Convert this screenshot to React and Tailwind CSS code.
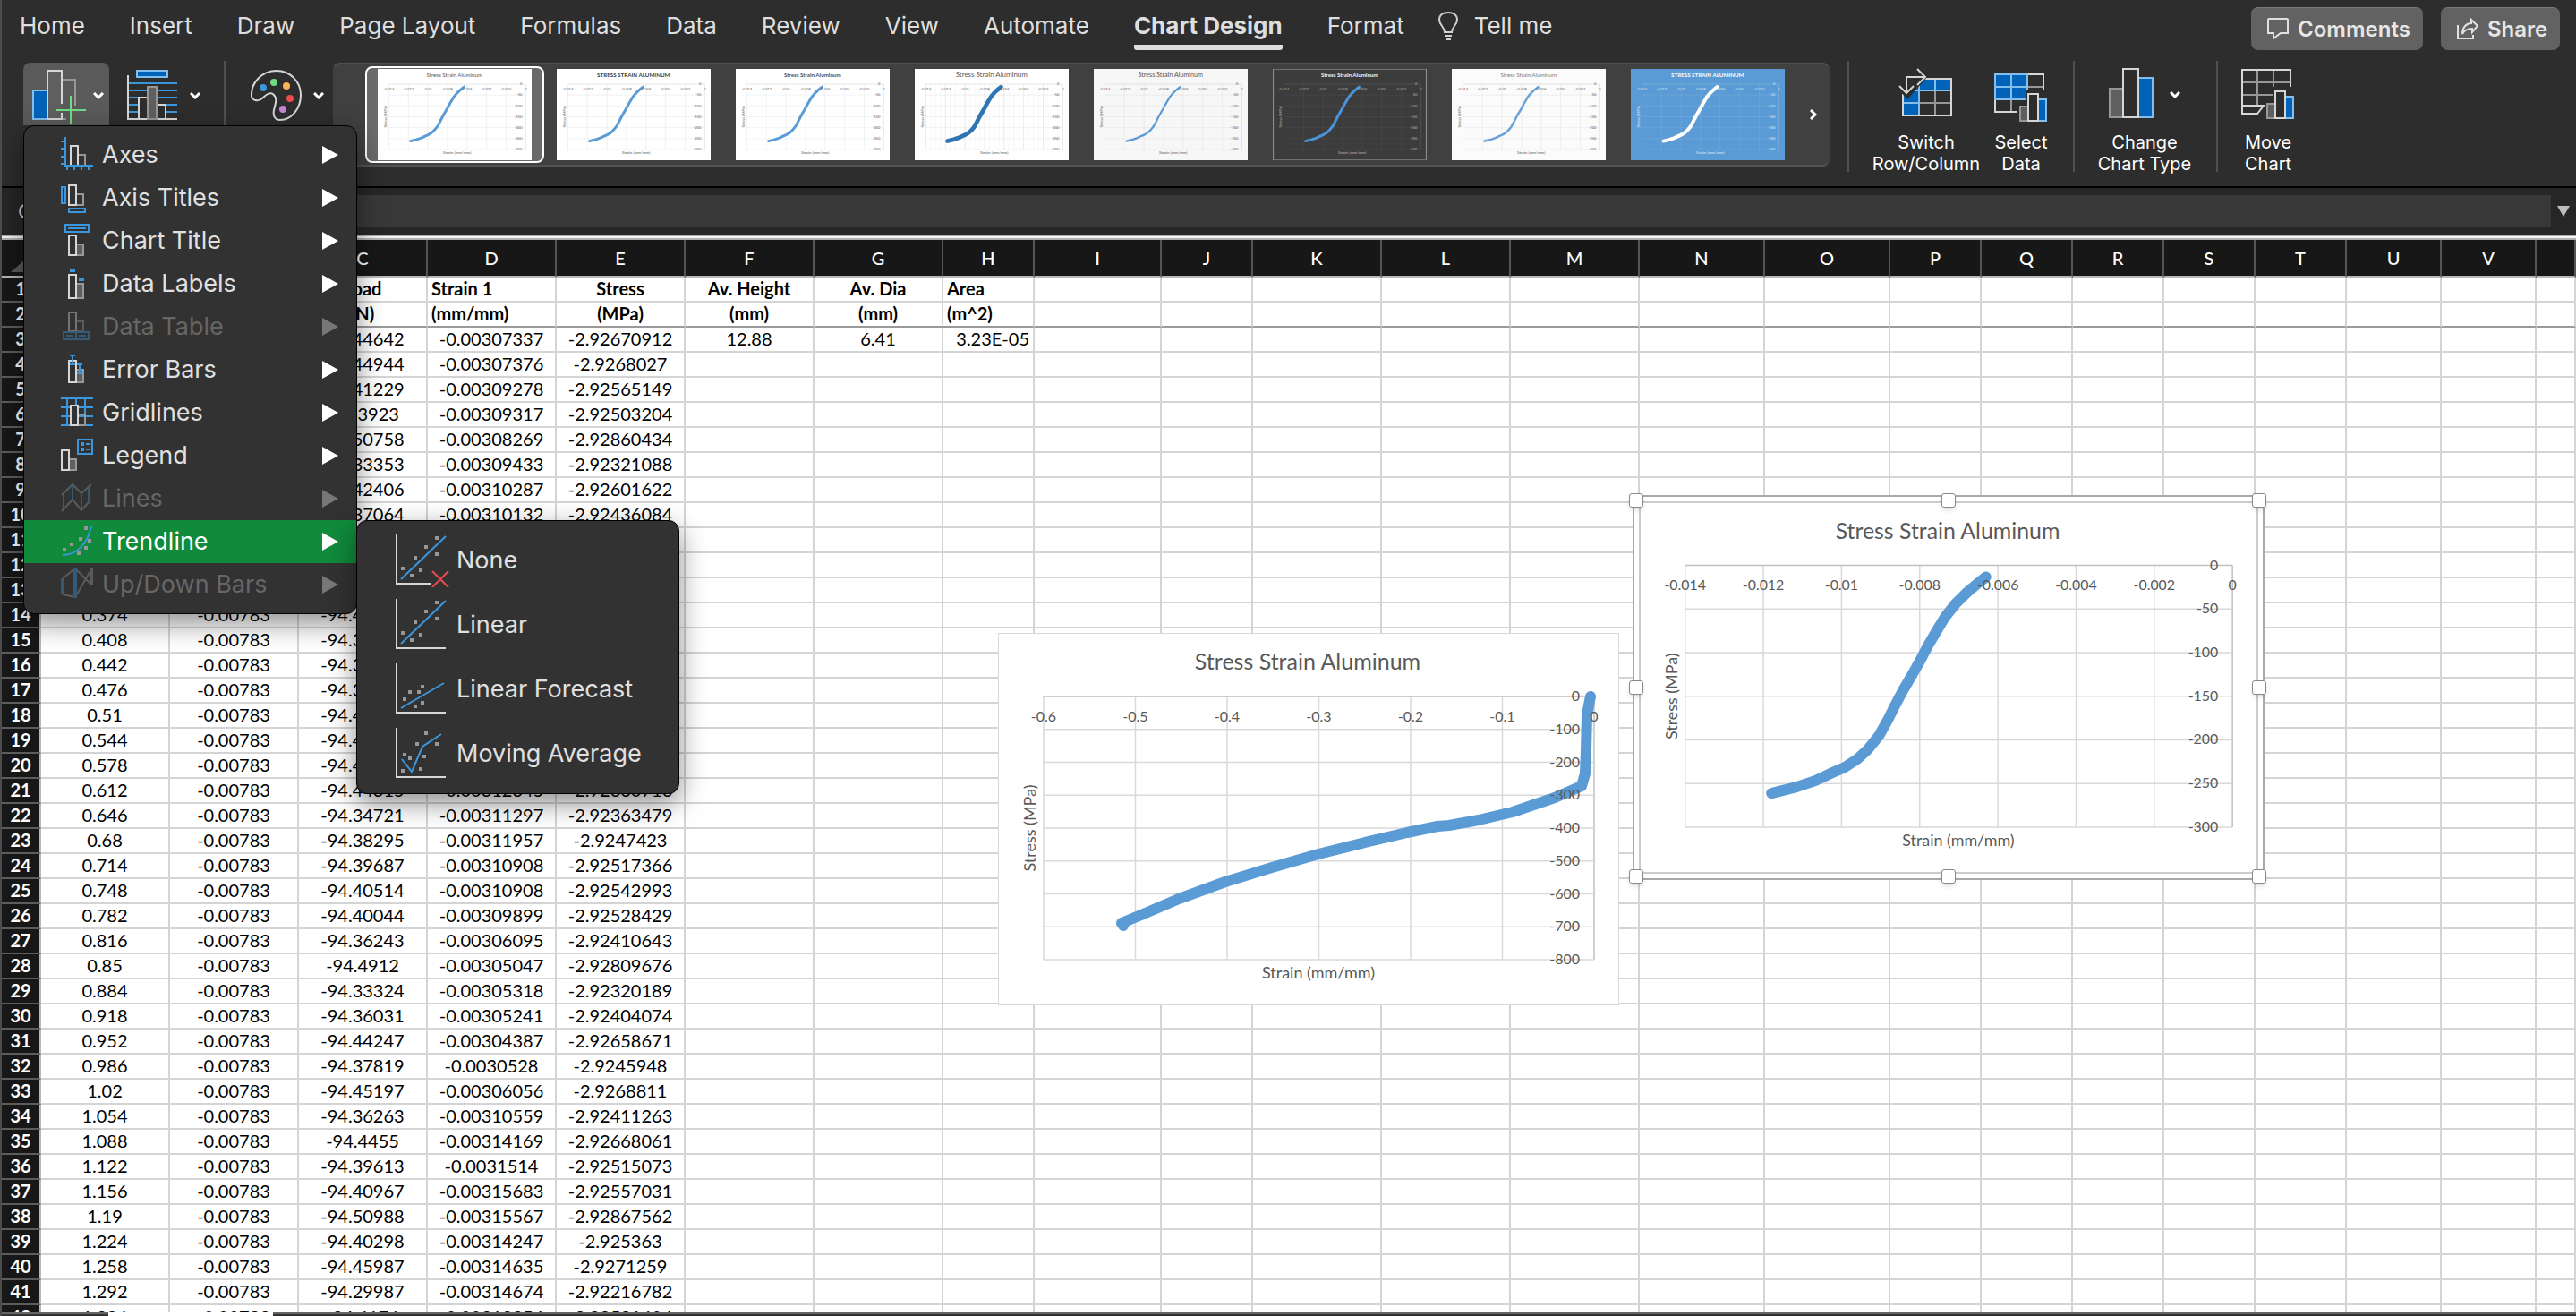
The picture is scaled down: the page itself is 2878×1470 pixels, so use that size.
import { clsx } from "clsx";

const BLUE = "#3a96dd";
const FILL = "#0063b8";
const LIGHT = "#83beec";
const PALE = "#d6d6d6";
const MID = "#979797";
const DARK = "#5f5f5f";

const TABS = ["Home", "Insert", "Draw", "Page Layout", "Formulas", "Data", "Review", "View", "Automate", "Chart Design", "Format"];

const COLUMNS = [
  ["A", "w-[144px]"],
  ["B", "w-[144px]"],
  ["C", "w-[144px]"],
  ["D", "w-[144px]"],
  ["E", "w-[144px]"],
  ["F", "w-[144px]"],
  ["G", "w-[144px]"],
  ["H", "w-[102px]"],
  ["I", "w-[142px]"],
  ["J", "w-[102px]"],
  ["K", "w-[144px]"],
  ["L", "w-[144px]"],
  ["M", "w-[144px]"],
  ["N", "w-[140px]"],
  ["O", "w-[140px]"],
  ["P", "w-[102px]"],
  ["Q", "w-[102px]"],
  ["R", "w-[102px]"],
  ["S", "w-[102px]"],
  ["T", "w-[102px]"],
  ["U", "w-[106px]"],
  ["V", "w-[106px]"],
  ["", "w-auto"],
];

const P = "-0.00783";

const ROWS = [
  ["", "", "Load", "Strain 1", "Stress", "Av. Height", "Av. Dia", "Area"],
  ["", "", "(N)", "(mm/mm)", "(MPa)", "(mm)", "(mm)", "(m^2)"],
  ["", "", "-94.44642", "-0.00307337", "-2.92670912", "12.88", "6.41", "3.23E-05"],
  ["", "", "-94.44944", "-0.00307376", "-2.9268027"],
  ["", "", "-94.41229", "-0.00309278", "-2.92565149"],
  ["", "", "-94.3923", "-0.00309317", "-2.92503204"],
  ["", "", "-94.50758", "-0.00308269", "-2.92860434"],
  ["", "", "-94.33353", "-0.00309433", "-2.92321088"],
  ["", "", "-94.42406", "-0.00310287", "-2.92601622"],
  ["", "", "-94.37064", "-0.00310132", "-2.92436084"],
  [],
  [],
  [],
  ["0.374", P, "-94.41508"],
  ["0.408", P, "-94.38121"],
  ["0.442", P, "-94.36774"],
  ["0.476", P, "-94.39052"],
  ["0.51", P, "-94.42236"],
  ["0.544", P, "-94.40871"],
  ["0.578", P, "-94.43119"],
  ["0.612", P, "-94.44315", "-0.00312345", "-2.92660716"],
  ["0.646", P, "-94.34721", "-0.00311297", "-2.92363479"],
  ["0.68", P, "-94.38295", "-0.00311957", "-2.9247423"],
  ["0.714", P, "-94.39687", "-0.00310908", "-2.92517366"],
  ["0.748", P, "-94.40514", "-0.00310908", "-2.92542993"],
  ["0.782", P, "-94.40044", "-0.00309899", "-2.92528429"],
  ["0.816", P, "-94.36243", "-0.00306095", "-2.92410643"],
  ["0.85", P, "-94.4912", "-0.00305047", "-2.92809676"],
  ["0.884", P, "-94.33324", "-0.00305318", "-2.92320189"],
  ["0.918", P, "-94.36031", "-0.00305241", "-2.92404074"],
  ["0.952", P, "-94.44247", "-0.00304387", "-2.92658671"],
  ["0.986", P, "-94.37819", "-0.0030528", "-2.9245948"],
  ["1.02", P, "-94.45197", "-0.00306056", "-2.9268811"],
  ["1.054", P, "-94.36263", "-0.00310559", "-2.92411263"],
  ["1.088", P, "-94.4455", "-0.00314169", "-2.92668061"],
  ["1.122", P, "-94.39613", "-0.0031514", "-2.92515073"],
  ["1.156", P, "-94.40967", "-0.00315683", "-2.92557031"],
  ["1.19", P, "-94.50988", "-0.00315567", "-2.92867562"],
  ["1.224", P, "-94.40298", "-0.00314247", "-2.925363"],
  ["1.258", P, "-94.45987", "-0.00314635", "-2.9271259"],
  ["1.292", P, "-94.29987", "-0.00314674", "-2.92216782"],
  ["1.326", P, "-94.4176", "-0.00313354", "-2.92581604"],
];

const FULL_CURVE = {
  x: ["-0.6", "-0.5", "-0.4", "-0.3", "-0.2", "-0.1", "0"],
  y: ["0", "-100", "-200", "-300", "-400", "-500", "-600", "-700", "-800"],
  points:
    "661,70 657,90 656,130 655,156 651,170 621,183 574,199 536,208 503,214 490,215 456,222 409,233 357,246 305,261 253,277 201,296 159,314 137,323 139,326",
};

const ELASTIC_CURVE = {
  x: ["-0.014", "-0.012", "-0.01", "-0.008", "-0.006", "-0.004", "-0.002", "0"],
  y: ["0", "-50", "-100", "-150", "-200", "-250", "-300"],
  points:
    "388,83 379,90 366,101 354,113 342,128 333,143 323,160 314,177 305,193 295,210 286,227 278,243 268,261 255,277 243,288 229,297 215,303 196,312 175,319 147,326",
};

const STYLES = [
  { name: "Style 1" },
  { name: "Style 2", caps: true, bold: true, title: "#404040" },
  { name: "Style 3", bold: true, title: "#44546a", grid: "#d9e0ec" },
  { name: "Style 4", titleSize: 32, stroke: "#2e75b6", weight: 19, minor: true },
  { name: "Style 5", titleSize: 29, weight: 9, bg: "#f7f7f7" },
  { name: "Style 6", bold: true, bg: "#3c3c3c", title: "#f2f2f2", label: "#b5b5b5", grid: "#555555", axis: "#777777", frame: "#8c8c8c", stroke: "#4a94dc" },
  { name: "Style 7", title: "#7f7f7f", bg: "#fbfbfb", weight: 10, stroke: "#6aa1d8" },
  { name: "Style 8", caps: true, bold: true, bg: "#5b9bd5", title: "#ffffff", label: "#dcebf8", grid: "#7db0de", axis: "#a9cbe9", stroke: "#ffffff", weight: 16 },
];

function Chart({ data, look = {}, className }) {
  const {
    bg = "#ffffff",
    grid = "#d9d9d9",
    axis = "#bfbfbf",
    title = "#595959",
    label = "#595959",
    stroke = "#5b9bd5",
    weight = 12,
    titleSize = 25,
    bold,
    caps,
    minor,
    frame,
  } = look;
  const left = 50, right = 665, top = 70, bottom = 364;
  const stepX = (right - left) / (data.x.length - 1);
  const stepY = (bottom - top) / (data.y.length - 1);
  const heading = "Stress Strain Aluminum";

  return (
    <svg viewBox="0 0 692 414" preserveAspectRatio="xMidYMid slice" className={clsx("block", className)} fontFamily="Lato, 'Open Sans', sans-serif" role="img" aria-label={heading}>
      <rect width="692" height="414" fill={bg} />
      {frame && <rect x="2" y="2" width="688" height="410" fill="none" stroke={frame} strokeWidth="5" />}
      {minor &&
        Array.from({ length: 28 }, (_, i) => (
          <line key={i} x1={left + (i * (right - left)) / 28} x2={left + (i * (right - left)) / 28} y1={top} y2={bottom} stroke="#eeeeee" strokeWidth="2" />
        ))}
      {data.x.map((t, i) => (
        <line key={t} x1={left + i * stepX} x2={left + i * stepX} y1={top} y2={bottom} stroke={i === data.x.length - 1 ? axis : grid} strokeWidth="1.5" />
      ))}
      {data.y.map((t, i) => (
        <line key={t} x1={left} x2={right} y1={top + i * stepY} y2={top + i * stepY} stroke={i === 0 ? axis : grid} strokeWidth="1.5" />
      ))}
      <polyline points={data.points} fill="none" stroke={stroke} strokeWidth={weight} strokeLinecap="round" strokeLinejoin="round" />
      <g fill={label} fontSize="16" textAnchor="middle">
        {data.x.map((t, i) => (
          <text key={t} x={left + i * stepX} y="98">{t}</text>
        ))}
      </g>
      <g fill={label} fontSize="16" textAnchor="end">
        {data.y.map((t, i) => (
          <text key={t} x="649" y={top + i * stepY + 5}>{t}</text>
        ))}
      </g>
      <text x="345" y="40" textAnchor="middle" fontSize={titleSize} fontWeight={bold ? 700 : 400} fill={title}>
        {caps ? heading.toUpperCase() : heading}
      </text>
      <text x="357" y="385" textAnchor="middle" fontSize="18" fill={label}>Strain (mm/mm)</text>
      <text transform="translate(41 217) rotate(-90)" textAnchor="middle" fontSize="18" fill={label}>Stress (MPa)</text>
    </svg>
  );
}

function Chevron({ className }) {
  return (
    <svg viewBox="0 0 12 8" className={clsx("w-3 h-2", className)} fill="none" stroke="#fff" strokeWidth="3">
      <path d="M1 1 L6 6 L11 1" />
    </svg>
  );
}

function Divider({ className }) {
  return <div className={clsx("w-0.5 h-[124px] bg-[#505050] shrink-0", className)} />;
}

function AddElementIcon() {
  return (
    <svg width="60" height="60" viewBox="0 0 60 60" fill="none" strokeWidth="2">
      <rect x="1" y="23" width="16" height="32" fill={FILL} stroke={LIGHT} />
      <path d="M33 11 H48 V40 M33 55 H38" stroke={MID} />
      <path d="M33 38 V1 H17 V55 H33 V48" fill={DARK} stroke={PALE} />
      <path d="M43 29 V60 M27 45 H60" stroke="#6fdc85" />
    </svg>
  );
}

function QuickLayoutIcon() {
  return (
    <svg width="56" height="60" viewBox="0 0 56 60" fill="none" strokeWidth="2">
      <rect x="11" y="1" width="34" height="7" fill={FILL} stroke={LIGHT} />
      <path d="M2 15 H56 M2 23 H56 M2 31 H56 M2 39 H56 M2 47 H56" stroke={BLUE} />
      <path d="M1 6 V55 H56" stroke={PALE} />
      <rect x="13" y="31" width="10" height="24" fill="#2d2d2d" stroke={PALE} />
      <rect x="33" y="39" width="10" height="16" fill="#2d2d2d" stroke={PALE} />
      <rect x="23" y="19" width="10" height="36" fill={DARK} stroke={MID} />
    </svg>
  );
}

function PaletteIcon() {
  return (
    <svg width="58" height="58" viewBox="0 0 58 58">
      <path
        d="M29 1 C44 1 56 13 56 28 C56 43 46 56 33 56 C26 56 25 50 26 45 C28 37 30 32 26 28 C22 24 17 28 14 31 C9 36 3 35 1 30 C0 14 13 1 29 1Z"
        fill="none"
        stroke={PALE}
        strokeWidth="2"
      />
      <circle cx="14" cy="20" r="4" fill={BLUE} />
      <circle cx="26" cy="14" r="4" fill="#6fdc85" />
      <circle cx="40" cy="18" r="4" fill="#fbb355" />
      <circle cx="44" cy="32" r="4" fill="#ea4b4f" />
      <circle cx="36" cy="44" r="4" fill="#c587d8" />
    </svg>
  );
}

function SwitchIcon() {
  return (
    <svg width="62" height="60" viewBox="0 0 62 60" fill="none" strokeWidth="2">
      <path d="M5 12 H59 V25 H23 V53 H5Z" fill={FILL} />
      <path d="M41 25 V53 M23 39 H59 M23 25 H59" stroke={MID} />
      <path d="M41 12 V25 M5 25 H59 M23 12 V53 M5 39 H23" stroke={LIGHT} />
      <rect x="5" y="12" width="54" height="41" stroke={PALE} />
      <path d="M0 8 H34 L10 35 L0 24Z" fill="#2d2d2d" />
      <path d="M9 28 V10 H29 M1 20 L9 28 L17 20 M21 1 L30 10 L21 19" stroke={PALE} />
    </svg>
  );
}

function MiniBars() {
  return (
    <>
      <path d="M25 36 H36 V20 H60 V56 H25Z" fill="#2d2d2d" />
      <rect x="29" y="39" width="9" height="16" fill={DARK} stroke={MID} />
      <rect x="49" y="31" width="9" height="24" fill={FILL} stroke={LIGHT} />
      <rect x="38" y="25" width="11" height="30" fill="#2d2d2d" stroke={PALE} />
    </>
  );
}

function SelectDataIcon() {
  return (
    <svg width="60" height="60" viewBox="0 -4 60 60" fill="none" strokeWidth="2">
      <path d="M37 17 H55 M19 31 V45" stroke={MID} />
      <rect x="1" y="3" width="54" height="42" stroke={PALE} />
      <rect x="1" y="3" width="36" height="28" fill={FILL} stroke={LIGHT} />
      <path d="M19 3 V31 M1 17 H37" stroke={LIGHT} />
      <MiniBars />
    </svg>
  );
}

function ChangeTypeIcon() {
  return (
    <svg width="50" height="60" viewBox="0 0 50 60" strokeWidth="2">
      <rect x="1" y="23" width="15" height="32" fill={DARK} stroke={MID} />
      <rect x="33" y="11" width="16" height="44" fill={FILL} stroke={LIGHT} />
      <rect x="16" y="1" width="17" height="54" fill="#2d2d2d" stroke={PALE} />
    </svg>
  );
}

function MoveChartIcon() {
  return (
    <svg width="60" height="60" viewBox="0 -1 60 60" fill="none" strokeWidth="2">
      <path d="M18 1 V41 M36 1 V41 M1 15 H55 M1 29 H55" stroke={MID} />
      <path d="M1 41 V1 H55 V29" stroke={PALE} />
      <MiniBars />
      <path d="M1 41 H25 L18 50 H1Z" fill="#2d2d2d" stroke={PALE} />
    </svg>
  );
}

function Bars({ x = 9, y = 14, h = 22, short = 13, filled }) {
  return (
    <>
      <rect x={x + 8} y={y + h - short} width="8" height={short} fill={filled ? DARK : "none"} stroke={MID} />
      <rect x={x} y={y} width="8" height={h} fill="#323232" stroke={PALE} />
    </>
  );
}

const MENU_ICONS = {
  Axes: (
    <>
      <Bars x={11} y={10} h={22} short={12} />
      <path d="M5 0 V32 H36 M0 5 H5 M0 13 H5 M0 22 H5 M0 30 H5 M7 32 V37 M15 32 V37 M23 32 V37 M31 32 V37" stroke={BLUE} />
    </>
  ),
  "Axis Titles": (
    <>
      <rect x="1" y="8" width="4" height="18" stroke={BLUE} />
      <Bars y={6} h={22} short={12} />
      <rect x="9" y="32" width="18" height="4" stroke={BLUE} />
    </>
  ),
  "Chart Title": (
    <>
      <rect x="5" y="2" width="26" height="8" stroke={BLUE} />
      <path d="M8 6 H28" stroke={BLUE} />
      <Bars y={14} h={22} short={12} filled />
    </>
  ),
  "Data Labels": (
    <>
      <path d="M10 5 H16 M20 15 H26" stroke={BLUE} strokeWidth="4" />
      <Bars y={10} h={26} short={16} filled />
    </>
  ),
  "Data Table": (
    <>
      <Bars y={4} h={21} short={11} />
      <path d="M3 26 H31 V34 H3Z M17 26 V34 M6 30 H14 M20 30 H28" stroke={BLUE} />
    </>
  ),
  "Error Bars": (
    <>
      <Bars y={10} h={24} short={14} filled />
      <path d="M10 4 H16 M13 4 V14 M10 14 H16 M18 14 H24 M21 14 V24 M18 24 H24" stroke={BLUE} />
    </>
  ),
  Gridlines: (
    <>
      <path d="M0 4 H36 M0 14 H36 M0 24 H36 M0 34 H36 M7 4 V34 M17 4 V34 M27 4 V34" stroke={BLUE} />
      <Bars x={11} y={12} h={22} short={12} />
    </>
  ),
  Legend: (
    <>
      <rect x="19" y="2" width="16" height="16" stroke={BLUE} />
      <path d="M22 7 H26 M22 13 H26" stroke={BLUE} strokeWidth="4" />
      <path d="M28 7 H32 M28 13 H32" stroke={BLUE} />
      <Bars x={1} y={14} h={22} short={12} filled />
    </>
  ),
  Lines: (
    <>
      <path d="M1 16 L13 4 L23 14 L34 4 M1 34 L13 21 L23 33 L33 22" stroke={MID} />
      <path d="M3 15 V31 M13 5 V21 M23 14 V32 M31 8 V24" stroke={BLUE} />
    </>
  ),
  Trendline: (
    <>
      <path d="M4 27 v4 M12 21 v4 M22 15 v4 M28 3 v4 M32 17 v4 M28 25 v4 M20 31 v4" stroke={MID} strokeWidth="4" />
      <path d="M2 35 C18 35 30 22 34 3" stroke={BLUE} />
    </>
  ),
  "Up/Down Bars": (
    <>
      <path d="M2 13 L16 2 L33 19 M2 31 L16 34 L34 3" stroke={MID} />
      <path d="M2 13 V31 M16 1 V35" stroke={BLUE} strokeWidth="4" />
      <path d="M34 1 V20" stroke={MID} strokeWidth="4" />
    </>
  ),
};

const MENU = Object.keys(MENU_ICONS);
const DISABLED = ["Data Table", "Lines", "Up/Down Bars"];

const TRENDLINES = [
  {
    label: "None",
    line: "6,51 56,3",
    axis: "M1 1 V56 H39",
    dots: [[8, 39], [18, 47], [22, 27], [28, 41], [34, 15], [46, 5], [46, 23]],
    cross: true,
  },
  {
    label: "Linear",
    line: "6,51 56,3",
    axis: "M1 1 V56 H56",
    dots: [[8, 39], [18, 47], [22, 27], [28, 41], [34, 15], [46, 5], [46, 23]],
  },
  {
    label: "Linear Forecast",
    line: "6,51 54,23",
    axis: "M1 1 V56 H56",
    dots: [[10, 41], [16, 33], [26, 33], [30, 27], [22, 49], [30, 45]],
  },
  {
    label: "Moving Average",
    line: "7,36 18,50 30,22 51,8",
    axis: "M1 1 V56 H56",
    dots: [[10, 31], [16, 35], [8, 49], [24, 19], [34, 7], [46, 19], [32, 33], [28, 47]],
  },
];

function TrendlineMenu() {
  return (
    <ul className="absolute left-full top-0 w-[361px] py-2 bg-[#323232] border border-black rounded-xl shadow-[0_10px_30px_rgba(0,0,0,0.45)]">
      {TRENDLINES.map((t) => (
        <li key={t.label}>
          <button className="flex items-center w-full h-[72px] pl-[43px] gap-2 text-[27px] leading-8 text-[#e0e0e0]">
            <svg width="60" height="60" viewBox="0 0 60 60" fill="none" strokeWidth="2" className="shrink-0">
              <path d={t.axis} stroke={PALE} />
              {t.dots.map(([x, y]) => (
                <rect key={x + "-" + y} x={x - 2} y={y - 2} width="4" height="4" fill={MID} />
              ))}
              <polyline points={t.line} stroke={BLUE} />
              {t.cross && <path d="M41 42 L59 60 M59 42 L41 60" stroke="#ea4b4f" />}
            </svg>
            <span>{t.label}</span>
          </button>
        </li>
      ))}
    </ul>
  );
}

function ElementMenu() {
  return (
    <ul className="absolute left-0 top-full w-[373px] py-2 bg-[#323232] border border-black rounded-xl shadow-[0_10px_30px_rgba(0,0,0,0.45)]">
      {MENU.map((label) => {
        const off = DISABLED.includes(label);
        const open = label === "Trendline";
        return (
          <li key={label} className="relative">
            <button
              disabled={off}
              className={clsx(
                "flex items-center w-full h-12 pl-[41px] pr-5 text-[27px] leading-8 text-left",
                open ? "bg-[#108a3b] text-white" : off ? "text-[#666666]" : "text-[#e0e0e0]"
              )}
            >
              <svg width="36" height="40" viewBox="0 0 36 40" fill="none" strokeWidth="2" className={clsx("shrink-0", off && "opacity-40")}>
                {MENU_ICONS[label]}
              </svg>
              <span className="flex-1 pl-2.5">{label}</span>
              <svg width="18" height="20" viewBox="0 0 18 20" fill={off ? "#777777" : "#ffffff"}>
                <path d="M0 0 L18 10 L0 20Z" />
              </svg>
            </button>
            {open && <TrendlineMenu />}
          </li>
        );
      })}
    </ul>
  );
}

function TabBar() {
  return (
    <div className="flex items-start h-[62px] pl-5 pr-[18px] text-[26px] leading-8 text-[#dedede]">
      <nav className="flex flex-1 gap-x-[50px] pt-[13px] whitespace-nowrap">
        {TABS.map((tab) => (
          <button
            key={tab}
            className={clsx("h-[43px] flex items-start", tab === "Chart Design" && "font-bold border-b-[6px] border-[#dedede] rounded-b-[3px]")}
          >
            {tab}
          </button>
        ))}
        <button className="-ml-3 h-8 flex items-center gap-[18px]">
          <svg width="22" height="32" viewBox="0 0 22 32" fill="none" stroke="#cfcfcf" strokeWidth="2">
            <path d="M7 23 C7 17 1 15 1 9 C1 4 5 1 11 1 C17 1 21 4 21 9 C21 15 15 17 15 23 Z M7 27 H15 M8 31 H14" />
          </svg>
          Tell me
        </button>
      </nav>
      <div className="flex gap-5 pt-2 text-[24px] font-semibold text-[#e6e6e6]">
        <button className="flex items-center gap-2.5 h-12 w-48 pl-[18px] rounded-lg bg-[#626262] border-t border-[#7a7a7a]">
          <svg width="24" height="25" viewBox="0 0 24 25" fill="none" stroke="#e0e0e0" strokeWidth="2">
            <path d="M1 2 Q1 1 2 1 H22 Q23 1 23 2 V17 H15 L7 23 V17 H1Z" />
          </svg>
          Comments
        </button>
        <button className="flex items-center gap-2.5 h-12 w-[133px] pl-[18px] rounded-lg bg-[#626262] border-t border-[#7a7a7a]">
          <svg width="24" height="25" viewBox="0 0 24 25" fill="none" stroke="#e0e0e0" strokeWidth="2">
            <path d="M1 8 V23 H18 V19" />
            <path d="M16 2 L23 9 L17 16 V12 C11 12 8 14 6 18 C6 10 11 6 16 6Z" />
          </svg>
          Share
        </button>
      </div>
    </div>
  );
}

function Tool({ icon, lines, chevron, className }) {
  return (
    <button className={clsx("flex flex-col items-center pt-2 text-[20px] leading-6 text-white whitespace-nowrap shrink-0", className)}>
      <span className="flex items-start h-[71px]">
        {icon}
        {chevron && <Chevron className="ml-[18px] mt-[26px]" />}
      </span>
      <span>{lines[0]}</span>
      <span>{lines[1]}</span>
    </button>
  );
}

function Ribbon() {
  return (
    <header className="relative z-20 h-[210px] bg-[#2d2d2d] border-b-2 border-black">
      <TabBar />
      <div className="flex items-start pt-1.5 pl-6">
        <div className="relative mt-0.5 shrink-0">
          <button aria-label="Add Chart Element" className="flex items-start w-24 h-[70px] pt-2 pl-2.5 rounded-t-lg bg-[#5a5a5a]">
            <AddElementIcon />
            <Chevron className="ml-2 mt-[25px]" />
          </button>
          <ElementMenu />
        </div>
        <button aria-label="Quick Layout" className="flex items-start ml-5 mt-2.5 shrink-0">
          <QuickLayoutIcon />
          <Chevron className="ml-3.5 mt-[25px]" />
        </button>
        <Divider className="ml-[26px]" />
        <button aria-label="Change Colors" className="flex items-start ml-7 mt-2.5 shrink-0">
          <PaletteIcon />
          <Chevron className="ml-3 mt-[25px]" />
        </button>
        <div className="flex items-center h-[116px] mt-0.5 ml-2.5 pl-9 bg-[#404040] border-y-2 border-y-[#525252] rounded-lg shrink-0">
          {STYLES.map((look, i) => (
            <button
              key={look.name}
              aria-label={look.name}
              className={clsx("w-[200px] h-[108px] flex items-center justify-center", i === 0 && "bg-[#6a6a6a] border-2 border-white rounded-lg")}
            >
              <Chart data={ELASTIC_CURVE} look={look} className="w-[172px] h-[102px]" />
            </button>
          ))}
          <button aria-label="More styles" className="w-9 flex justify-center">
            <Chevron className="-rotate-90" />
          </button>
        </div>
        <Divider className="ml-5" />
        <Tool className="ml-6 w-[124px]" icon={<SwitchIcon />} lines={["Switch", "Row/Column"]} />
        <Tool className="ml-3 w-[64px]" icon={<SelectDataIcon />} lines={["Select", "Data"]} />
        <Divider className="ml-[26px]" />
        <Tool className="ml-[22px] w-[112px]" icon={<ChangeTypeIcon />} lines={["Change", "Chart Type"]} chevron />
        <Divider className="ml-6" />
        <Tool className="ml-6 w-16" icon={<MoveChartIcon />} lines={["Move", "Chart"]} />
      </div>
    </header>
  );
}

function FormulaBar() {
  return (
    <div className="flex h-[52px] py-2 bg-[#262626] text-[22px] text-[#d0d0d0]">
      <span className="w-12 pl-[18px] leading-9 bg-[#262626]">C</span>
      <input aria-label="Formula" className="flex-1 bg-[#383838]" />
      <button aria-label="Expand formula bar" className="w-7 flex items-center justify-center">
        <svg width="14" height="12" viewBox="0 0 14 12" fill="#bdbdbd">
          <path d="M0 0 H14 L7 12Z" />
        </svg>
      </button>
    </div>
  );
}

function cellAlign(row, col) {
  if (row < 2 && (col === 3 || col === 7)) return "text-left pl-1";
  if (row === 2 && col === 7) return "text-right pr-1";
  return "text-center";
}

function Grid() {
  return (
    <table className="w-full table-fixed border-separate border-spacing-0 text-[20px] leading-6 whitespace-nowrap">
      <colgroup>
        <col className="w-11" />
        {COLUMNS.map(([name, width]) => (
          <col key={name} className={width} />
        ))}
      </colgroup>
      <thead>
        <tr className="h-[42px] bg-[#171717] text-white">
          <th className="p-0 border-b-2 border-b-[#b8b8b8] align-bottom">
            <svg width="30" height="16" viewBox="0 0 30 16" className="ml-2.5 mb-1" fill="#5c5c5c">
              <path d="M0 16 L18 0 H30 V16Z" />
            </svg>
          </th>
          {COLUMNS.map(([name]) => (
            <th key={name} scope="col" className="p-0 font-medium border-r-2 border-r-[#555555] border-b-2 border-b-[#b8b8b8]">
              {name}
            </th>
          ))}
        </tr>
      </thead>
      <tbody>
        {ROWS.map((row, r) => (
          <tr key={r} className={clsx("h-7", r < 2 && "font-bold")}>
            <th scope="row" className="p-0 pb-0.5 bg-[#171717] text-white font-bold border-b-2 border-b-[#5c5c5c] border-r-2 border-r-[#b8b8b8]">
              {r + 1}
            </th>
            {COLUMNS.map(([name], c) => (
              <td key={name} className={clsx("p-0 pb-0.5 border-r-2 border-r-[#d4d4d4] border-b-2", r === 1 ? "border-b-[#9a9a9a]" : "border-b-[#d4d4d4]", cellAlign(r, c))}>
                {row[c]}
              </td>
            ))}
          </tr>
        ))}
      </tbody>
    </table>
  );
}

const HANDLES = [
  "-left-1.5 -top-1",
  "left-1/2 -ml-2 -top-1",
  "-right-1 -top-1",
  "-left-1.5 top-1/2 -mt-2",
  "-right-1 top-1/2 -mt-2",
  "-left-1.5 -bottom-1.5",
  "left-1/2 -ml-2 -bottom-1.5",
  "-right-1 -bottom-1.5",
];

export default function App() {
  return (
    <div className="flex flex-col h-screen overflow-hidden bg-white border-l-2 border-[#4c4c4c] font-['Inter','Liberation_Sans',sans-serif]">
      <Ribbon />
      <FormulaBar />
      <main className="relative flex-1 min-h-0 overflow-hidden bg-white font-['Lato','Open_Sans',sans-serif] text-black">
        <div className="h-1.5 bg-[#f4f4f4] border-y-2 border-[#b0b0b0]" />
        <Grid />
        <div className="absolute left-[1113px] top-[445px] w-[694px] border border-[#d9d9d9]">
          <Chart data={FULL_CURVE} className="w-full" />
        </div>
        <div className="absolute left-[1822px] top-[291px] w-[706px] p-[5px] bg-white border-2 border-[#a9a9a9]">
          <div className="border-2 border-[#cccccc]">
            <Chart data={ELASTIC_CURVE} className="w-full" />
          </div>
          {HANDLES.map((place) => (
            <span key={place} className={clsx("absolute size-4 bg-white border border-[#8a8a8a] rounded-[3px] shadow-md", place)} />
          ))}
        </div>
      </main>
      <footer className="flex h-1 bg-[#333333] border-t-2 border-[#666666]">
        <div className="w-[184px] h-1 ml-[119px] -mt-0.5 bg-white" />
      </footer>
    </div>
  );
}
